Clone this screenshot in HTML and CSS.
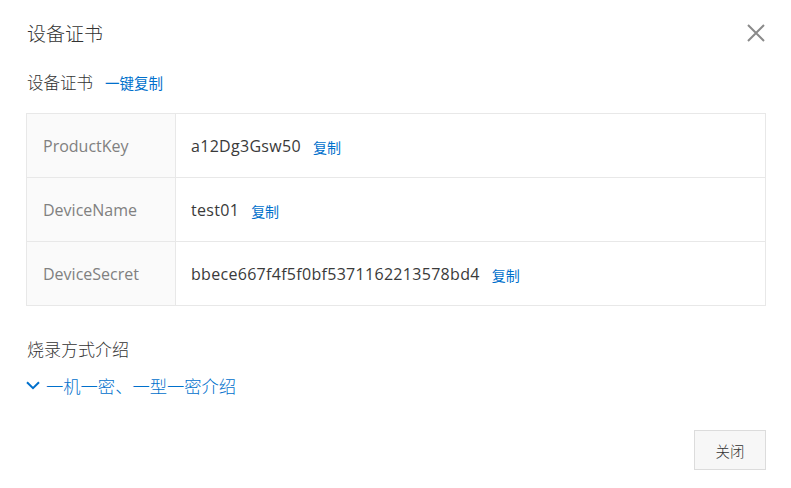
FILE: index.html
```html
<!DOCTYPE html>
<html lang="zh-CN">
<head>
<meta charset="utf-8">
<title>设备证书</title>
<link rel="stylesheet" href="styles.css">
</head>
<body>
<div class="dialog">
  <div class="header">
    <div class="title">设备证书</div>
    <button class="close" aria-label="关闭">
      <svg width="18" height="18" viewBox="0 0 18 18"><path d="M1 1L17 17M17 1L1 17" stroke="#8a8a8a" stroke-width="2" fill="none"/></svg>
    </button>
  </div>
  <div class="sub">
    <span class="sub-title">设备证书</span>
    <a class="link small">一键复制</a>
  </div>
  <div class="table">
    <div class="row">
      <div class="label">ProductKey</div>
      <div class="value"><span>a12Dg3Gsw50</span><a class="link copy">复制</a></div>
    </div>
    <div class="row">
      <div class="label">DeviceName</div>
      <div class="value"><span>test01</span><a class="link copy">复制</a></div>
    </div>
    <div class="row">
      <div class="label">DeviceSecret</div>
      <div class="value"><span>bbece667f4f5f0bf5371162213578bd4</span><a class="link copy">复制</a></div>
    </div>
  </div>
  <div class="section">烧录方式介绍</div>
  <a class="expand">
    <svg width="14" height="9" viewBox="0 0 14 9"><path d="M1 1.2L7 7.2L13 1.2" stroke="#0070cc" stroke-width="2" fill="none"/></svg>
    <span>一机一密、一型一密介绍</span>
  </a>
  <div class="footer">
    <button class="btn">关闭</button>
  </div>
</div>
</body>
</html>
```
FILE: styles.css
```css
html, body {
  margin: 0;
  padding: 0;
  background: #fff;
}
body {
  font-family: "Open Sans", "Noto Sans CJK SC", sans-serif;
  color: #333;
}
.dialog {
  padding: 20px 25px 0 26px;
}
.header {
  display: flex;
  justify-content: space-between;
  align-items: center;
  height: 26px;
}
.title {
  font-family: "Noto Sans CJK SC", sans-serif;
  font-weight: 300;
  font-size: 19px;
  line-height: 26px;
  color: #333;
  padding-left: 1px;
}
.close {
  border: 0;
  background: transparent;
  padding: 0;
  margin-right: 1px;
  width: 18px;
  height: 18px;
  display: flex;
}
.sub {
  margin-top: 24px;
  height: 24px;
  display: flex;
  align-items: center;
  padding-left: 1px;
}
.sub-title {
  font-family: "Noto Sans CJK SC", sans-serif;
  font-weight: 300;
  font-size: 16.5px;
  color: #333;
}
.link {
  color: #0070cc;
  font-family: "Noto Sans CJK SC", sans-serif;
  font-weight: 400;
  cursor: pointer;
}
.small {
  font-size: 14.5px;
  margin-left: 12px;
  margin-top: 1px;
}
.table {
  margin-top: 19px;
  border: 1px solid #e8e8e8;
}
.row {
  display: flex;
  height: 63px;
  border-top: 1px solid #e8e8e8;
}
.row:first-child {
  border-top: 0;
}
.label {
  width: 132px;
  background: #fafafa;
  border-right: 1px solid #e8e8e8;
  display: flex;
  align-items: center;
  padding-left: 16px;
  font-size: 16px;
  color: #808080;
  flex: none;
}
.value {
  display: flex;
  align-items: center;
  padding-left: 15px;
  font-size: 16px;
  letter-spacing: 0.3px;
  color: #3a3a3a;
}
.copy {
  font-size: 14px;
  letter-spacing: 0;
  margin-left: 12px;
  margin-top: 2px;
}
.section {
  margin-top: 31px;
  line-height: 24px;
  font-family: "Noto Sans CJK SC", sans-serif;
  font-weight: 300;
  font-size: 17px;
  color: #333;
  padding-left: 1px;
}
.expand {
  margin-top: 12px;
  display: flex;
  align-items: center;
  height: 24px;
  color: #0070cc;
  font-family: "Noto Sans CJK SC", sans-serif;
  font-weight: 300;
  font-size: 17.3px;
  cursor: pointer;
}
.expand svg {
  margin-right: 6px;
  margin-top: 1px;
}
.footer {
  margin-top: 33px;
  display: flex;
  justify-content: flex-end;
}
.btn {
  width: 72px;
  height: 40px;
  border: 1px solid #dcdcdc;
  background: #f7f7f7;
  color: #333;
  font-family: "Noto Sans CJK SC", sans-serif;
  font-weight: 300;
  font-size: 14.5px;
  padding: 0;
}
```
